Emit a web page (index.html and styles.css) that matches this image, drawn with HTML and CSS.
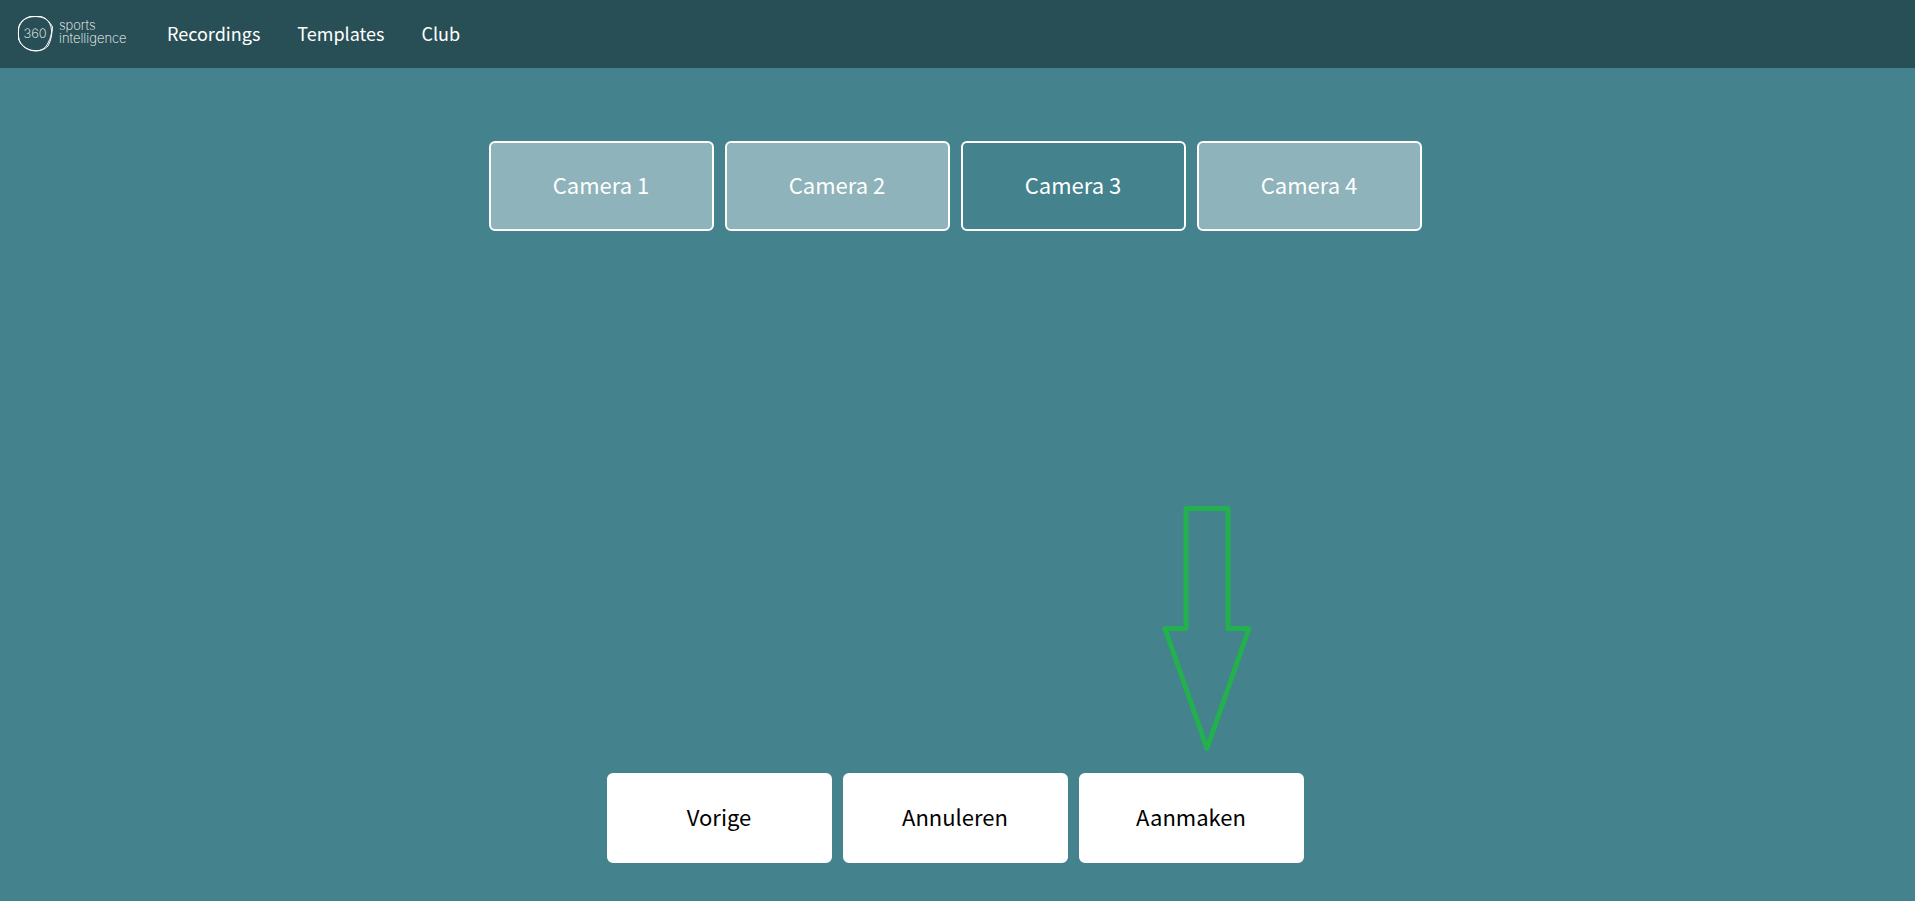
FILE: index.html
```html
<!DOCTYPE html>
<html lang="nl">
<head>
<meta charset="utf-8">
<title>360 Sports Intelligence</title>
<link rel="stylesheet" href="styles.css">
</head>
<body>
<header class="navbar">
  <a class="brand" href="#">
    <svg class="brand-logo" width="110" height="38" viewBox="0 0 110 38" role="img" aria-label="360 sports intelligence">
      <g class="brand-ring">
        <path d="M13 2.500H24C29 4 33 8 35.500 13C35 20 34 27 31 32C27 36 22 37.500 17 36.500C11 36.500 6 33 3.500 29C1 24 1 18 2 13C4 8 8 4 13 2.500Z"/>
        <path d="M9 4.500C15 1.800 22 2 28 4.500C32 7 34 11 34.500 16C35 22 31 30 28 33.500C24 37 17 38 12 35.500C6 33 3 29 1.500 25V14C2 10 5 6 9 4.500Z"/>
      </g>
      <text class="brand-name" x="18" y="24" text-anchor="middle">360</text>
      <text class="brand-name" x="42" y="16">sports</text>
      <text class="brand-name" x="42" y="29">intelligence</text>
    </svg>
  </a>
  <nav class="nav-links">
    <a href="#">Recordings</a>
    <a href="#">Templates</a>
    <a href="#">Club</a>
  </nav>
</header>
<main class="page">
  <div class="button-row">
    <button class="tile camera" type="button">Camera 1</button>
    <button class="tile camera" type="button">Camera 2</button>
    <button class="tile camera camera-selected" type="button">Camera 3</button>
    <button class="tile camera" type="button">Camera 4</button>
  </div>
  <div class="button-row">
    <button class="tile action" type="button">Vorige</button>
    <button class="tile action" type="button">Annuleren</button>
    <div class="pointed">
      <svg class="arrow" width="90" height="245" viewBox="0 0 90 245" aria-hidden="true">
        <path d="M24 2.500H66V122.500H87L45 242.500L3 122.500H24Z"/>
      </svg>
      <button class="tile action" type="button">Aanmaken</button>
    </div>
  </div>
</main>
</body>
</html>
```
FILE: styles.css
```css
* {
  box-sizing: border-box;
}

body {
  margin: 0;
  min-height: 100vh;
  display: flex;
  flex-direction: column;
  background: #44828e;
  color: #fff;
  font-family: "Noto Sans CJK SC", "Noto Sans", sans-serif;
}

.navbar {
  display: flex;
  align-items: center;
  gap: 40px;
  height: 68px;
  padding: 0 17px 2px;
  background: #294f56;
}

.brand-logo {
  display: block;
  overflow: visible;
}

.brand-ring {
  fill: none;
  stroke: #fff;
  stroke-width: 1;
}

.brand-name {
  fill: #fff;
  font-family: Inter, "Liberation Sans", sans-serif;
  font-size: 13px;
  font-weight: 200;
}

.nav-links {
  display: flex;
  gap: 37px;
  font-size: 18px;
  line-height: 28px;
}

.nav-links a {
  color: #fff;
  text-decoration: none;
}

.page {
  flex: 1;
  display: flex;
  flex-direction: column;
  justify-content: space-between;
  gap: 40px;
  padding: 73px 5px 38px 0;
}

.button-row {
  display: flex;
  justify-content: center;
  gap: 11px;
}

.tile {
  width: 225px;
  height: 90px;
  padding: 0 0 4px;
  border: 2px solid #fff;
  border-radius: 6px;
  font-family: inherit;
  font-size: 22px;
  line-height: 32px;
}

.camera {
  background: #8fb3bb;
  color: #fff;
}

.camera-selected {
  background: transparent;
}

.action {
  background: #fff;
  color: #000;
}

.pointed {
  position: relative;
}

.arrow {
  position: absolute;
  left: 83px;
  bottom: calc(100% + 22px);
  fill: none;
  stroke: #22b14c;
  stroke-width: 5;
  stroke-linejoin: round;
}
```
